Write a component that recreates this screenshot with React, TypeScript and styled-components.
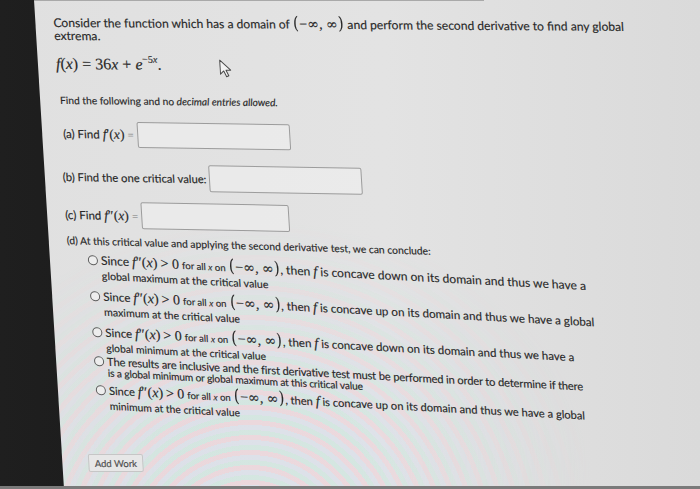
import React from 'react';
import styled, { createGlobalStyle } from 'styled-components';

const GlobalStyle = createGlobalStyle`
  html, body {
    margin: 0;
    padding: 0;
  }
  body {
    width: 700px;
    height: 489px;
    overflow: hidden;
    background: #dedede;
    font-family: Lato, "Liberation Sans", sans-serif;
  }
`;

const Screen = styled.div`
  position: relative;
  width: 700px;
  height: 489px;
  overflow: hidden;
  background: linear-gradient(90deg, #e0e0e0 0%, #e3e3e3 55%, #dadada 100%);

  /* monitor bezel on the left */
  &::before {
    content: '';
    position: absolute;
    inset: 0;
    background: linear-gradient(90deg, #1f1f1f 0%, #141414 60%, #181818 100%);
    clip-path: polygon(0 0, 34px 0, 64px 100%, 0 100%);
    z-index: 3;
  }

  /* bottom edge of the screen */
  &::after {
    content: '';
    position: absolute;
    left: 0;
    right: 0;
    bottom: 0;
    height: 3px;
    background: #7a7a7a;
    z-index: 3;
  }
`;

const Moire = styled.div`
  position: absolute;
  inset: 0;
  pointer-events: none;
  background: repeating-radial-gradient(
    circle at 250px 560px,
    rgba(255, 196, 210, 0.32) 0 5px,
    rgba(186, 238, 222, 0.34) 5px 10px,
    rgba(205, 222, 255, 0.24) 10px 15px
  );
  -webkit-mask-image: radial-gradient(ellipse 330px 250px at 260px 470px, #000 30%, transparent 100%);
  mask-image: radial-gradient(ellipse 330px 250px at 260px 470px, #000 30%, transparent 100%);
  z-index: 0;
`;

const TopEdge = styled.div`
  position: absolute;
  left: 34px;
  top: 0;
  width: 450px;
  height: 1px;
  background: #a9a9a9;
  z-index: 1;
`;

const Content = styled.div`
  position: relative;
  z-index: 2;
  padding: 15px 0 0 52px;
  transform: skewX(3.5deg);
  transform-origin: 0 0;
  color: #282828;
  font-size: 12px;
  white-space: nowrap;
  -webkit-text-stroke: 0.15px #282828;
`;

const Tilted = styled.div<{ $tilt: number; $mt: number; $ml?: number }>`
  margin-top: ${(p) => p.$mt}px;
  margin-left: ${(p) => p.$ml ?? 0}px;
  transform: skewY(${(p) => p.$tilt}deg);
  transform-origin: 0 50%;
`;

const Intro = styled(Tilted)`
  font-size: 12.1px;
`;

const TextLine = styled.div`
  height: 14px;
  line-height: 14px;
`;

const M = styled.span<{ $size?: number }>`
  font-family: "Liberation Serif", "DejaVu Serif", serif;
  font-size: ${(p) => p.$size ?? 14}px;
`;

const I = styled.span`
  font-family: "Liberation Serif", serif;
  font-style: italic;
`;

const Paren = styled.span`
  font-family: "DejaVu Serif", serif;
  font-size: 17px;
  font-weight: 300;
  line-height: 10px;
  display: inline-block;
  transform: scaleX(0.8);
`;

const Inf = styled.span`
  font-family: "DejaVu Serif", serif;
  font-size: 14px;
`;

const Small = styled.span`
  font-size: 9.5px;
`;

const Formula = styled(Tilted)`
  height: 20px;
  line-height: 20px;
  display: flex;
  align-items: center;
`;

const Sup = styled.sup`
  font-size: 10px;
  vertical-align: 7px;
  line-height: 0;
`;

const Cursor = styled.svg`
  margin-left: 57px;
  margin-top: 6px;
`;

const Instruction = styled(Tilted)<{ $size: number }>`
  height: 14px;
  line-height: 14px;
  font-size: ${(p) => p.$size}px;
`;

const Em = styled.em`
  font-style: italic;
`;

const PartRow = styled(Tilted)<{ $h: number; $size?: number }>`
  height: ${(p) => p.$h}px;
  display: flex;
  align-items: center;
  gap: 3px;
  font-size: ${(p) => p.$size ?? 11.5}px;
`;

const AnswerBox = styled.div<{ $w: number }>`
  flex: 0 0 ${(p) => p.$w}px;
  width: ${(p) => p.$w}px;
  height: 100%;
  box-sizing: border-box;
  border: 1px solid #9c9c9c;
  border-radius: 2px;
  background: rgba(238, 238, 238, 0.7);
`;

const Eq = styled.span`
  color: #9a9a9a;
  -webkit-text-stroke: 0;
`;

const OptionList = styled(Tilted)`
  display: flex;
  flex-direction: column;
`;

const OptionRow = styled.div<{ $math: boolean; $mt?: number }>`
  display: grid;
  grid-template-columns: 13px max-content;
  grid-template-rows: ${(p) => (p.$math ? '22px 8px' : '14px 8px')};
  padding-bottom: 6px;
  align-items: center;
  margin-top: ${(p) => p.$mt ?? 0}px;
`;

const Radio = styled.span`
  grid-column: 1;
  grid-row: 1;
  width: 10px;
  height: 10px;
  box-sizing: border-box;
  border-radius: 50%;
  border: 1.4px solid #5c5c5c;
  background: #ededed;
`;

const OptLine = styled.span<{ $row: number; $size: number; $ls?: number }>`
  grid-column: 2;
  grid-row: ${(p) => p.$row};
  line-height: 14px;
  font-size: ${(p) => p.$size}px;
  letter-spacing: ${(p) => p.$ls ?? 0}px;
`;

const AddWork = styled.button`
  margin-top: 39px;
  margin-left: 8px;
  width: 55px;
  height: 18px;
  padding: 0;
  border: 1px solid #c6c6c6;
  border-radius: 2px;
  background: #e7e7e7;
  color: #5a5a5a;
  font-family: Lato, "Liberation Sans", sans-serif;
  font-size: 9.5px;
  display: block;
`;

const Interval = () => (
  <M>
    <Paren>(</Paren>−<Inf>∞</Inf>, <Inf>∞</Inf>
    <Paren>)</Paren>
  </M>
);

const FPrime = ({ primes, size }: { primes: string; size?: number }) => (
  <M $size={size}>
    <I>f</I>
    {primes}(<I>x</I>)
  </M>
);

const Since = ({ rest }: { rest: string }) => (
  <>
    Since <FPrime primes="″" /> <M>&gt; 0</M>{' '}
    <Small>
      for all <I>x</I> on
    </Small>{' '}
    <Interval />, then{' '}
    <M>
      <I>f</I>
    </M>{' '}
    {rest}
  </>
);

type Opt = {
  math: boolean;
  first: React.ReactNode;
  second: string;
  size: number;
  subSize: number;
  ls?: number;
  mt?: number;
};

const options: Opt[] = [
  {
    math: true,
    size: 12,
    subSize: 10.6,
    first: <Since rest="is concave down on its domain and thus we have a" />,
    second: 'global maximum at the critical value',
  },
  {
    math: true,
    size: 11.6,
    subSize: 10.6,
    first: <Since rest="is concave up on its domain and thus we have a global" />,
    second: 'maximum at the critical value',
  },
  {
    math: true,
    size: 11.45,
    subSize: 10.3,
    first: <Since rest="is concave down on its domain and thus we have a" />,
    second: 'global minimum at the critical value',
  },
  {
    math: false,
    mt: -3,
    size: 11.1,
    subSize: 10.2,
    ls: -0.15,
    first:
      'The results are inclusive and the first derivative test must be performed in order to determine if there',
    second: 'is a global minimum or global maximum at this critical value',
  },
  {
    math: true,
    mt: -3,
    size: 11.1,
    subSize: 10.3,
    first: <Since rest="is concave up on its domain and thus we have a global" />,
    second: 'minimum at the critical value',
  },
];

export default function App() {
  return (
    <Screen>
      <GlobalStyle />
      <Moire />
      <TopEdge />
      <Content>
        <Intro $tilt={0.4} $mt={0}>
          <TextLine>
            Consider the function which has a domain of <Interval /> and perform the second
            derivative to find any global
          </TextLine>
          <TextLine>extrema.</TextLine>
        </Intro>

        <Formula $tilt={0.4} $mt={11}>
          <M $size={16}>
            <I>f</I>(<I>x</I>) = 36<I>x</I> + <I>e</I>
            <Sup>
              −5<I>x</I>
            </Sup>
            .
          </M>
          <Cursor width="13" height="19" viewBox="0 0 13 19">
            <path
              d="M1 1 L1 15 L4.4 11.8 L7 17.6 L9.2 16.6 L6.7 11 L11.4 11 Z"
              fill="#f4f4f4"
              stroke="#4a4a4a"
              strokeWidth="1"
              strokeLinejoin="round"
            />
          </Cursor>
        </Formula>

        <Instruction $tilt={0.6} $mt={19} $ml={2} $size={10.2}>
          Find the following and no <Em>decimal entries allowed.</Em>
        </Instruction>

        <PartRow $tilt={0.8} $mt={14} $ml={3} $h={26}>
          <span>
            (a) Find <FPrime primes="′" size={13.5} /> <Eq>=</Eq>
          </span>
          <AnswerBox $w={153} />
        </PartRow>

        <PartRow $tilt={0.9} $mt={16} $h={27} $size={11.2}>
          <span>(b) Find the one critical value:</span>
          <AnswerBox $w={153} />
        </PartRow>

        <PartRow $tilt={1} $mt={11} $h={27}>
          <span>
            (c) Find <FPrime primes="″" size={13.5} /> <Eq>=</Eq>
          </span>
          <AnswerBox $w={148} />
        </PartRow>

        <Instruction $tilt={1.7} $mt={5} $size={10.3}>
          (d) At this critical value and applying the second derivative test, we can conclude:
        </Instruction>

        <OptionList $tilt={3} $mt={2} $ml={20}>
          {options.map((o, i) => (
            <OptionRow key={i} $math={o.math} $mt={o.mt}>
              <Radio />
              <OptLine $row={1} $size={o.size} $ls={o.ls}>
                {o.first}
              </OptLine>
              <OptLine $row={2} $size={o.subSize} $ls={o.ls}>
                {o.second}
              </OptLine>
            </OptionRow>
          ))}
        </OptionList>

        <AddWork>Add Work</AddWork>
      </Content>
    </Screen>
  );
}
